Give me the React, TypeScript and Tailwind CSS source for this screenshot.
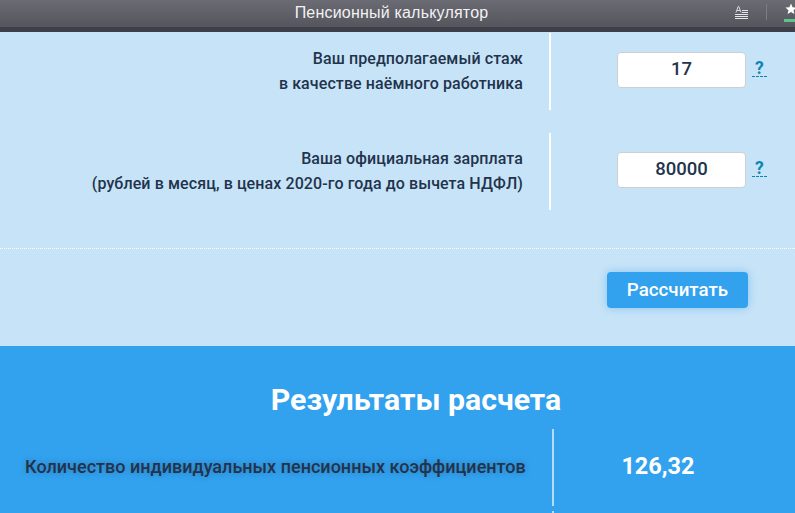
import React from "react";

function Field({ lines, value }: { lines: string[]; value: string }) {
  return (
    <div className="flex h-[77px] items-center">
      <div className="flex h-full w-[549px] shrink-0 flex-col items-end justify-center pb-[2px] pr-[26px] text-[16px] font-medium leading-[25px] tracking-[0.1px] text-[#22334d]">
        {lines.map((l) => (
          <div key={l}>{l}</div>
        ))}
      </div>
      <div className="h-full w-[2px] shrink-0 bg-white" />
      <div className="mb-[4px] ml-[66px] flex h-[36px] w-[129px] shrink-0 items-center justify-center rounded-[4px] border border-[#cfcfcf] bg-white text-[18.5px] font-medium text-[#22334d]">
        {value}
      </div>
      <div className="mb-[6px] ml-[6px] border-b border-dashed border-[#0b84b0] px-[3px] text-[17.5px] font-bold leading-[16px] text-[#0b84b0]">
        ?
      </div>
    </div>
  );
}

export default function App() {
  return (
    <div className="h-[513px] w-[795px] overflow-hidden bg-[#c7e3f7] font-['Roboto',sans-serif]">
      <header className="relative flex h-[32px] items-start justify-center border-b-[5px] border-[#3f3f4a] bg-gradient-to-b from-[#6b6b74] to-[#55555e]">
        <div className="ml-[-12px] mt-[4px] font-['Liberation_Sans',sans-serif] text-[16px] leading-[18px] tracking-[0.2px] text-[#f2f2f2]">
          Пенсионный калькулятор
        </div>
        <div className="absolute left-[735px] top-[6px]">
          <svg width="13" height="13" viewBox="0 0 13 13" fill="none" stroke="#e6e6e8" strokeWidth="1">
            <path d="M0 8.5h13M0 10.5h13M0 12.5h13M7 4.5h6M7 6.5h6" />
            <path d="M1 6.5 3.2 0.5h.6L6 6.5M2 4.5h3" strokeWidth="0.9" />
          </svg>
        </div>
        <div className="absolute left-[766px] top-[4px] h-[16px] w-px bg-[#7d7d85]" />
        <div className="absolute left-[785px] top-[3px]">
          <svg width="12" height="12" viewBox="0 0 24 24" fill="#ffffff">
            <path d="M12 1l3.2 7.3 7.9.8-6 5.3 1.8 7.8L12 18.1 5.1 22.2l1.8-7.8-6-5.3 7.9-.8z" />
          </svg>
        </div>
        <div className="absolute left-[784px] top-[19px] h-[3px] w-[11px] bg-[#5fc48c]" />
      </header>

      <section className="flex flex-col gap-[23px] pt-px">
        <Field lines={["Ваш предполагаемый стаж", "в качестве наёмного работника"]} value="17" />
        <Field lines={["Ваша официальная зарплата", "(рублей в месяц, в ценах 2020-го года до вычета НДФЛ)"]} value="80000" />
      </section>

      <div className="mt-[38px] border-t border-dotted border-white" />

      <div className="flex h-[97px] justify-end pr-[47px] pt-[23px]">
        <button className="h-[36px] w-[141px] rounded-[4px] bg-[#32a2ef] text-[18.75px] font-medium text-white shadow-[0_0_8px_rgba(50,162,239,0.45)]">
          Рассчитать
        </button>
      </div>

      <section className="h-[167px] bg-[#32a2ef]">
        <h2 className="pl-[37px] pt-[35px] text-center text-[30.25px] font-bold leading-[38px] text-white">Результаты расчета</h2>
        <div className="mt-[10px] flex h-[77px] items-center">
          <div className="w-[552px] shrink-0 pb-[2px] pl-[25px] text-[18.05px] font-medium text-[#22334d] [text-shadow:0_0_6px_rgba(34,51,77,0.35)]">
            Количество индивидуальных пенсионных коэффициентов
          </div>
          <div className="h-full w-[2px] shrink-0 bg-[#b5dcf8]" />
          <div className="flex-1 pb-[2px] pr-[33px] text-center text-[23.5px] font-bold text-white">126,32</div>
        </div>
        <div className="ml-[552px] mt-[5px] h-[10px] w-[2px] bg-[#b5dcf8]" />
      </section>
    </div>
  );
}
